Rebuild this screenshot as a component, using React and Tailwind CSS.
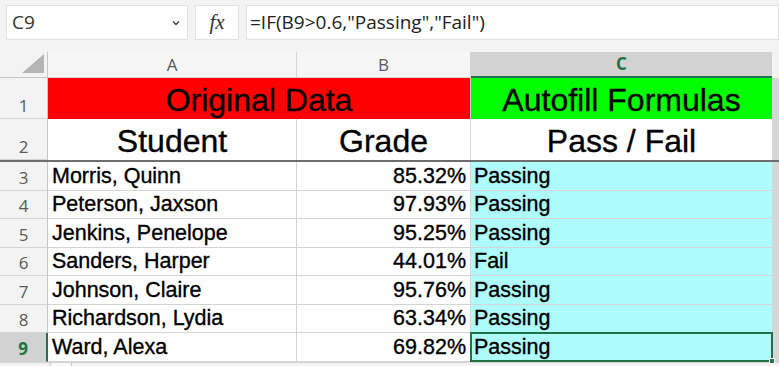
import React from 'react';

const students = [
  { name: 'Morris, Quinn', grade: '85.32%', result: 'Passing' },
  { name: 'Peterson, Jaxson', grade: '97.93%', result: 'Passing' },
  { name: 'Jenkins, Penelope', grade: '95.25%', result: 'Passing' },
  { name: 'Sanders, Harper', grade: '44.01%', result: 'Fail' },
  { name: 'Johnson, Claire', grade: '95.76%', result: 'Passing' },
  { name: 'Richardson, Lydia', grade: '63.34%', result: 'Passing' },
  { name: 'Ward, Alexa', grade: '69.82%', result: 'Passing' },
];

const ui = { fontFamily: '"Open Sans", "Noto Sans", sans-serif' };
const cell = { fontFamily: '"Liberation Sans", Arial, sans-serif' };

const RowHead = ({ n, active, h }) => (
  <div
    className={`flex items-end justify-center border-b border-[#d4d4d4] text-[17px] ${h} ${
      active
        ? 'bg-[#d2d2d2] border-r-2 border-r-[#217346] font-bold text-[#217346]'
        : 'bg-[#f3f3f3] border-r border-r-[#c6c6c6] text-[#595959]'
    }`}
    style={ui}
  >
    <span className="leading-none pb-[4px]">{n}</span>
  </div>
);

export default function App() {
  return (
    <div className="w-[779px] h-[366px] overflow-hidden bg-[#f3f3f3] select-none">
      {/* Formula bar */}
      <div className="h-[52px] flex items-start pt-[5px] pl-[6px] gap-[7px]" style={ui}>
        <div className="w-[182px] h-[35px] bg-white border border-[#e1e1e1] flex items-center justify-between pl-[5px] pr-[5px]">
          <span className="text-[19px] text-[#333]">C9</span>
          <svg width="12" height="12" viewBox="0 0 12 12" className="text-[#444]">
            <path d="M3 4.5 L6 7.5 L9 4.5" fill="none" stroke="currentColor" strokeWidth="1.4" />
          </svg>
        </div>
        <div className="w-[44px] h-[35px] bg-white border border-[#e1e1e1] flex items-center justify-center">
          <span className="italic text-[21px] text-[#333]" style={{ fontFamily: '"Liberation Serif", "DejaVu Serif", serif' }}>
            fx
          </span>
        </div>
        <div className="flex-1 h-[35px] bg-white border border-[#e1e1e1] flex items-center pl-[3px]">
          <span className="text-[19px] text-[#222]">=IF(B9&gt;0.6,"Passing","Fail")</span>
        </div>
      </div>

      {/* Grid */}
      <div className="grid grid-cols-[48px_249px_174px_301px_7px] [-webkit-text-stroke:0.35px_currentColor]">
        {/* Column headers */}
        <div className="h-[26px] bg-[#f3f3f3] border-r border-b border-[#c6c6c6] relative">
          <svg width="22" height="19" className="absolute right-[3px] bottom-[4px]">
            <polygon points="22,0 22,19 0,19" fill="#b4b4b4" />
          </svg>
        </div>
        <div className="h-[26px] bg-[#f6f6f6] border-r border-b border-[#d4d4d4] flex items-center justify-center text-[17px] text-[#595959] [-webkit-text-stroke:0]" style={ui}>A</div>
        <div className="h-[26px] bg-[#f6f6f6] border-r border-b border-[#d4d4d4] flex items-center justify-center text-[17px] text-[#595959] [-webkit-text-stroke:0]" style={ui}>B</div>
        <div className="h-[26px] bg-[#d2d2d2] border-b-2 border-[#217346] flex items-center justify-center text-[17px] font-bold text-[#217346] [-webkit-text-stroke:0]" style={ui}>C</div>
        <div className="h-[26px] bg-[#f3f3f3]" />

        {/* Row 1 */}
        <RowHead n="1" h="h-[41px] [-webkit-text-stroke:0]" />
        <div className="col-span-2 h-[41px] bg-[#ff0000] border-r border-[#d4d4d4] flex items-end justify-center text-[32px] text-black leading-[normal]" style={cell}>
          Original Data
        </div>
        <div className="h-[41px] bg-[#00ff00] flex items-end justify-center text-[32px] text-black leading-[normal]" style={cell}>
          Autofill Formulas
        </div>
        <div className="h-[41px] bg-[#d6d6d6]" />

        {/* Row 2 */}
        <RowHead n="2" h="h-[41px] [-webkit-text-stroke:0]" />
        <div className="h-[41px] bg-white border-r border-[#d4d4d4] flex items-end justify-center text-[32px] text-black leading-[normal]" style={cell}>Student</div>
        <div className="h-[41px] bg-white border-r border-[#d4d4d4] flex items-end justify-center text-[32px] text-black leading-[normal]" style={cell}>Grade</div>
        <div className="h-[41px] bg-white flex items-end justify-center text-[32px] text-black leading-[normal]" style={cell}>Pass / Fail</div>
        <div className="h-[41px] bg-[#d6d6d6]" />

        {/* Freeze line */}
        <div className="col-span-5 h-[2px] bg-[#6e6e6e]" />

        {/* Data rows */}
        {students.map((s, i) => {
          const last = i === students.length - 1;
          return (
            <React.Fragment key={s.name}>
              <RowHead n={i + 3} active={last} h="h-[28.5px] [-webkit-text-stroke:0]" />
              <div className="h-[28.5px] bg-white border-r border-b border-[#d4d4d4] flex items-end pl-[4px] pb-[1px] text-[21.5px] text-black leading-[normal]" style={cell}>
                {s.name}
              </div>
              <div className="h-[28.5px] bg-white border-r border-b border-[#d4d4d4] flex items-end justify-end pr-[4px] pb-[1px] text-[21.5px] text-black leading-[normal]" style={cell}>
                {s.grade}
              </div>
              <div className="relative h-[28.5px] bg-[#aefcfc] border-b border-[#d4d4d4] flex items-end pl-[3px] pb-[1px] text-[21.5px] text-black leading-[normal]" style={cell}>
                {s.result}
                {last && (
                  <div className="absolute -left-[1px] -top-[1px] -right-[1px] -bottom-[1px] border-2 border-[#217346]">
                    <div className="absolute -right-[4px] -bottom-[4px] w-[6px] h-[6px] bg-[#217346] border border-white" />
                  </div>
                )}
              </div>
              <div className="h-[28.5px] bg-[#d6d6d6]" />
            </React.Fragment>
          );
        })}

        {/* Bottom strip */}
        <div className="col-span-5 h-[6px] bg-[#f3f3f3] flex border-t border-[#d4d4d4]">
          <div className="w-[50px]" />
          <div className="w-[22px] border-l border-r border-[#c6c6c6] bg-[#fafafa]" />
        </div>
      </div>
    </div>
  );
}
